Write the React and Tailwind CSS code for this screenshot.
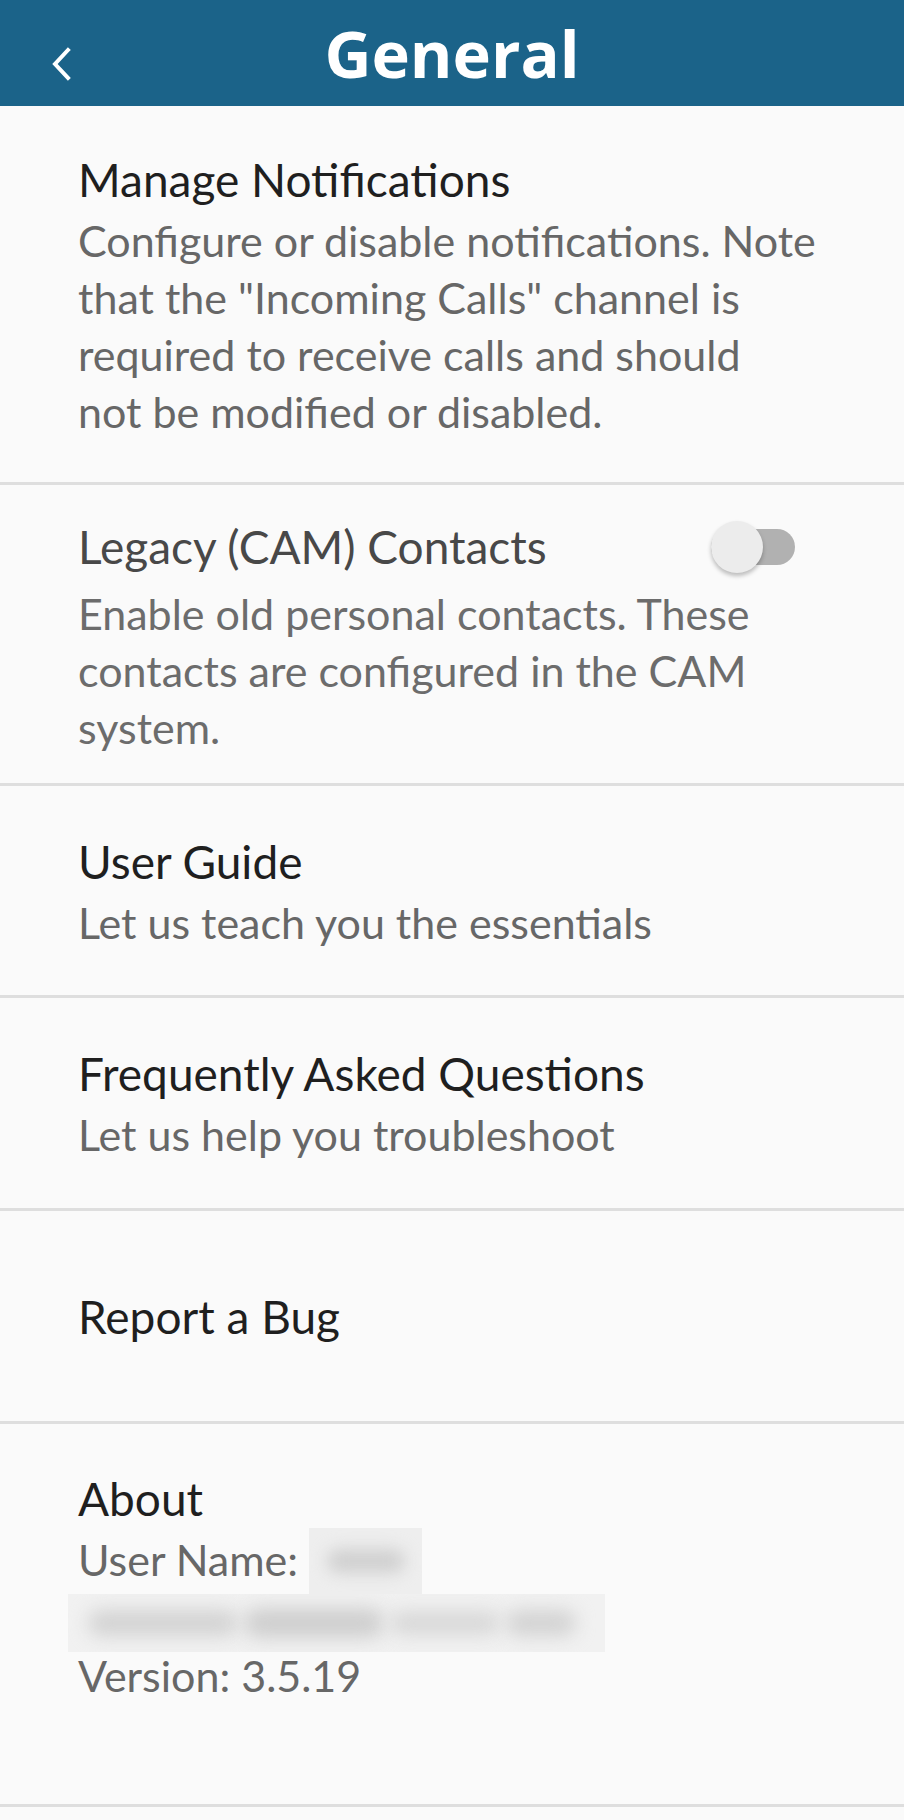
import { useState } from "react";

function BackIcon() {
  return (
    <svg width="24" height="34" viewBox="0 0 24 34" fill="none" className="block">
      <path d="M18 3 L5 17 L18 31" stroke="white" strokeWidth="4" strokeLinecap="square" strokeLinejoin="miter" />
    </svg>
  );
}

function Switch({ checked, onChange }) {
  return (
    <button
      type="button"
      onClick={() => onChange(!checked)}
      className="relative mt-[2px] mr-[65px] flex h-[56px] w-[88px] shrink-0 items-center"
    >
      <span className="block h-[36px] w-[84px] rounded-full bg-[#b1b1b1]" />
      <span
        className={
          checked
            ? "absolute left-[36px] top-[2px] h-[52px] w-[52px] rounded-full bg-[#1b6389] shadow-[0_3px_4px_rgba(0,0,0,0.25)]"
            : "absolute left-[0px] top-[2px] h-[52px] w-[52px] rounded-full bg-[#ececec] shadow-[0_3px_4px_rgba(0,0,0,0.25)]"
        }
      />
    </button>
  );
}

function Row({ className, children }) {
  return <div className={"border-b-[3px] border-[#dedede] pl-[78px] pr-[40px] " + className}>{children}</div>;
}

export default function App() {
  const [legacy, setLegacy] = useState(false);

  return (
    <div className="min-h-[1820px] bg-[#fafafa] font-[Lato,sans-serif]">
      <header className="relative flex h-[106px] items-center justify-center bg-[#1b6389]">
        <button type="button" className="absolute left-[50px] top-[47px]">
          <BackIcon />
        </button>
        <h1 className="font-['Open_Sans',sans-serif] text-[65px] font-bold leading-[106px] text-white">General</h1>
      </header>

      <Row className="pt-[44px] pb-[42px]">
        <div className="text-[46px] leading-[60px] text-[#1f1f1f]">Manage Notifications</div>
        <div className="mt-[2px] text-[43px] leading-[57px] text-[#676767]">
          Configure or disable notifications. Note
          <br />
          that the "Incoming Calls" channel is
          <br />
          required to receive calls and should
          <br />
          not be modified or disabled.
        </div>
      </Row>

      <Row className="pt-[32px] pb-[27px]">
        <div className="flex items-start justify-between">
          <div className="text-[46px] leading-[60px] text-[#484848]">Legacy (CAM) Contacts</div>
          <Switch checked={legacy} onChange={setLegacy} />
        </div>
        <div className="mt-[8px] text-[43px] leading-[57px] text-[#6c6c6c]">
          Enable old personal contacts. These
          <br />
          contacts are configured in the CAM
          <br />
          system.
        </div>
      </Row>

      <Row className="pt-[46px] pb-[44px]">
        <div className="text-[46px] leading-[60px] text-[#1f1f1f]">User Guide</div>
        <div className="mt-[2px] text-[43px] leading-[57px] text-[#676767]">Let us teach you the essentials</div>
      </Row>

      <Row className="pt-[46px] pb-[45px]">
        <div className="text-[46px] leading-[60px] text-[#1f1f1f]">Frequently Asked Questions</div>
        <div className="mt-[2px] text-[43px] leading-[57px] text-[#676767]">Let us help you troubleshoot</div>
      </Row>

      <Row className="pt-[76px] pb-[74px]">
        <div className="text-[46px] leading-[60px] text-[#1f1f1f]">Report a Bug</div>
      </Row>

      <Row className="pt-[45px] pb-[100px]">
        <div className="text-[46px] leading-[60px] text-[#1f1f1f]">About</div>
        <div className="mt-[2px] text-[43px] leading-[57px] text-[#676767]">
          <div className="h-[57px] whitespace-nowrap">
            User Name:{" "}
            <span className="-mb-[6px] -mt-[3px] inline-flex h-[66px] w-[113px] items-center justify-center overflow-hidden bg-[#eeeeee] align-top">
              <span className="block h-[24px] w-[78px] rounded-full bg-[#d0d0d0] blur-[8px]" />
            </span>
          </div>
          <div className="-mb-[5px] -ml-[10px] mt-[6px] flex h-[58px] w-[537px] items-center gap-[6px] overflow-hidden bg-[#f1f1f1] px-[20px]">
            <span className="block h-[26px] w-[150px] rounded-full bg-[#d3d3d3] blur-[9px]" />
            <span className="block h-[30px] w-[140px] rounded-full bg-[#cfcfcf] blur-[9px]" />
            <span className="block h-[24px] w-[110px] rounded-full bg-[#d8d8d8] blur-[9px]" />
            <span className="block h-[26px] w-[70px] rounded-full bg-[#d3d3d3] blur-[9px]" />
          </div>
          <div className="h-[57px]">Version: 3.5.19</div>
        </div>
      </Row>
    </div>
  );
}
